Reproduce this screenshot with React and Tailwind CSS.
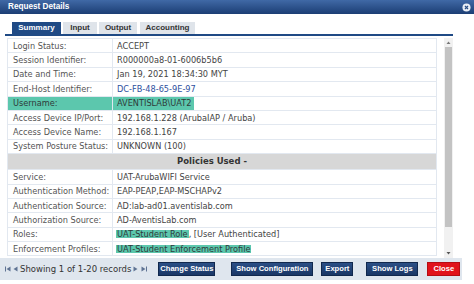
import React from 'react';

const rows = [
  { label: 'Login Status:', value: 'ACCEPT' },
  { label: 'Session Identifier:', value: 'R000000a8-01-6006b5b6' },
  { label: 'Date and Time:', value: 'Jan 19, 2021 18:34:30 MYT' },
  { label: 'End-Host Identifier:', value: 'DC-FB-48-65-9E-97', link: true },
  { label: 'Username:', value: 'AVENTISLAB\\UAT2', mark: 'row' },
  { label: 'Access Device IP/Port:', value: '192.168.1.228 (ArubaIAP / Aruba)' },
  { label: 'Access Device Name:', value: '192.168.1.167' },
  { label: 'System Posture Status:', value: 'UNKNOWN (100)' },
  { section: 'Policies Used -' },
  { label: 'Service:', value: 'UAT-ArubaWIFI Service' },
  { label: 'Authentication Method:', value: 'EAP-PEAP,EAP-MSCHAPv2' },
  { label: 'Authentication Source:', value: 'AD:lab-ad01.aventislab.com' },
  { label: 'Authorization Source:', value: 'AD-AventisLab.com' },
  { label: 'Roles:', value: 'UAT-Student Role', rest: ', [User Authenticated]', mark: 'text' },
  { label: 'Enforcement Profiles:', value: 'UAT-Student Enforcement Profile', mark: 'text' },
];

function Row({ row }) {
  if (row.section) {
    return (
      <div className="h-[16px] flex items-center justify-center pr-[20px] bg-[#d7d7d7] border-b border-[#e2e8f0] font-bold text-[8.5px] text-[#333]">
        {row.section}
      </div>
    );
  }
  const teal = 'bg-[#5cc7ad]';
  return (
    <div className="h-[14.4px] flex border-b border-[#e2e8f0]">
      <div className={`w-[105px] shrink-0 flex items-center pl-[5px] border-r border-[#e2e8f0] ${row.mark === 'row' ? teal + ' text-[#2f3a3a]' : 'text-[#555]'}`}>
        {row.label}
      </div>
      <div className="flex-1 flex items-center text-[#444]">
        {row.mark === 'row' && (
          <span className={`${teal} h-full flex items-center pl-[4px] pr-[3px] text-[#2f3a3a]`}>{row.value}</span>
        )}
        {row.mark === 'text' && (
          <span className="pl-[3px] flex items-center h-full">
            <span className={`${teal} px-[1px] text-[#2f3a3a]`}>{row.value}</span>
            {row.rest && <span>{row.rest}</span>}
          </span>
        )}
        {!row.mark && (
          <span className={`pl-[4px] ${row.link ? 'text-[#2d4f9e]' : ''}`}>{row.value}</span>
        )}
      </div>
    </div>
  );
}

function Btn({ children, red, className = '' }) {
  return (
    <button
      className={`h-[14px] flex items-center justify-center font-['Liberation_Sans',sans-serif] font-bold text-[7.6px] text-white border ${
        red ? 'bg-[#e1131b] border-[#b50d14]' : 'bg-linear-to-b from-[#2b4f86] to-[#1a3766] border-[#11284d]'
      } ${className}`}
    >
      {children}
    </button>
  );
}

function FirstIcon() {
  return (
    <svg width="6" height="6" viewBox="0 0 6 6">
      <rect x="0" y="0.5" width="1" height="5" fill="#5f7393" />
      <path d="M5.5 0.5 L1.5 3 L5.5 5.5 Z" fill="#5f7393" />
    </svg>
  );
}

export default function App() {
  return (
    <div className="w-[474px] h-[284px] bg-white overflow-hidden font-['DejaVu_Sans',sans-serif] text-[8.2px] leading-none">
      <div className="h-[14px] flex items-center justify-between pl-[8px] pr-[3px] bg-linear-to-b from-[#4069a6] to-[#1c3e74]">
        <span className="font-['Liberation_Sans',sans-serif] font-bold text-[8.2px] text-white">Request Details</span>
        <svg width="9" height="9" viewBox="0 0 10 10">
          <circle cx="5" cy="5" r="4.5" fill="#e9eef5" />
          <path d="M3.3 3.3 L6.7 6.7 M6.7 3.3 L3.3 6.7" stroke="#2a4f86" strokeWidth="1.3" />
        </svg>
      </div>

      <div className="mt-[8px] ml-[5px] w-[448px] border-b-2 border-[#1f4a85] flex gap-[2px] pl-[7px] font-['Liberation_Sans',sans-serif] font-bold text-[8px]">
        <div className="w-[49px] h-[12px] flex items-center justify-center bg-[#1f4a85] text-white">Summary</div>
        <div className="w-[34px] h-[12px] flex items-center justify-center bg-[#dfe4ea] text-[#333]">Input</div>
        <div className="w-[38px] h-[12px] flex items-center justify-center bg-[#dfe4ea] text-[#333]">Output</div>
        <div className="w-[55px] h-[12px] flex items-center justify-center bg-[#dfe4ea] text-[#333] ml-[1px]">Accounting</div>
      </div>

      <div className="h-[220px] flex mt-[2px]">
        <div className="ml-[7px] w-[430px] h-[218px] border-x border-t border-[#e2e8f0]">
          {rows.map((r, i) => (
            <Row key={i} row={r} />
          ))}
        </div>
        <div className="ml-[7px] w-[9px] h-[220px] bg-[#f1f1f1] flex flex-col items-center">
          <svg width="5" height="9" viewBox="0 0 5 9" className="shrink-0">
            <path d="M0.5 6 L2.5 3.5 L4.5 6 Z" fill="#777" />
          </svg>
          <div className="w-[7px] h-[180px] bg-[#c3c3c3]" />
          <div className="flex-1" />
          <svg width="5" height="9" viewBox="0 0 5 9" className="shrink-0">
            <path d="M0.5 3 L2.5 5.5 L4.5 3 Z" fill="#555" />
          </svg>
        </div>
      </div>

      <div className="w-[462px] h-[22px] bg-[#dfe6ee] flex items-center pl-[5px]">
        <FirstIcon />
        <svg width="5" height="6" viewBox="0 0 5 6" className="ml-[2px]">
          <path d="M4.5 0.5 L0.5 3 L4.5 5.5 Z" fill="#5f7393" />
        </svg>
        <span className="ml-[2px] text-[8.5px] text-[#333]">Showing 1 of 1-20 records</span>
        <svg width="5" height="6" viewBox="0 0 5 6" className="ml-[2px]">
          <path d="M0.5 0.5 L4.5 3 L0.5 5.5 Z" fill="#5f7393" />
        </svg>
        <svg width="6" height="6" viewBox="0 0 6 6" className="ml-[3px] rotate-180">
          <rect x="0" y="0.5" width="1" height="5" fill="#5f7393" />
          <path d="M5.5 0.5 L1.5 3 L5.5 5.5 Z" fill="#5f7393" />
        </svg>
        <Btn className="w-[57px] ml-[11px]">Change Status</Btn>
        <Btn className="w-[82px] ml-[16px]">Show Configuration</Btn>
        <Btn className="w-[32px] ml-[8px]">Export</Btn>
        <Btn className="w-[52px] ml-[13px]">Show Logs</Btn>
        <Btn red className="w-[33px] ml-[9px]">Close</Btn>
      </div>
    </div>
  );
}
